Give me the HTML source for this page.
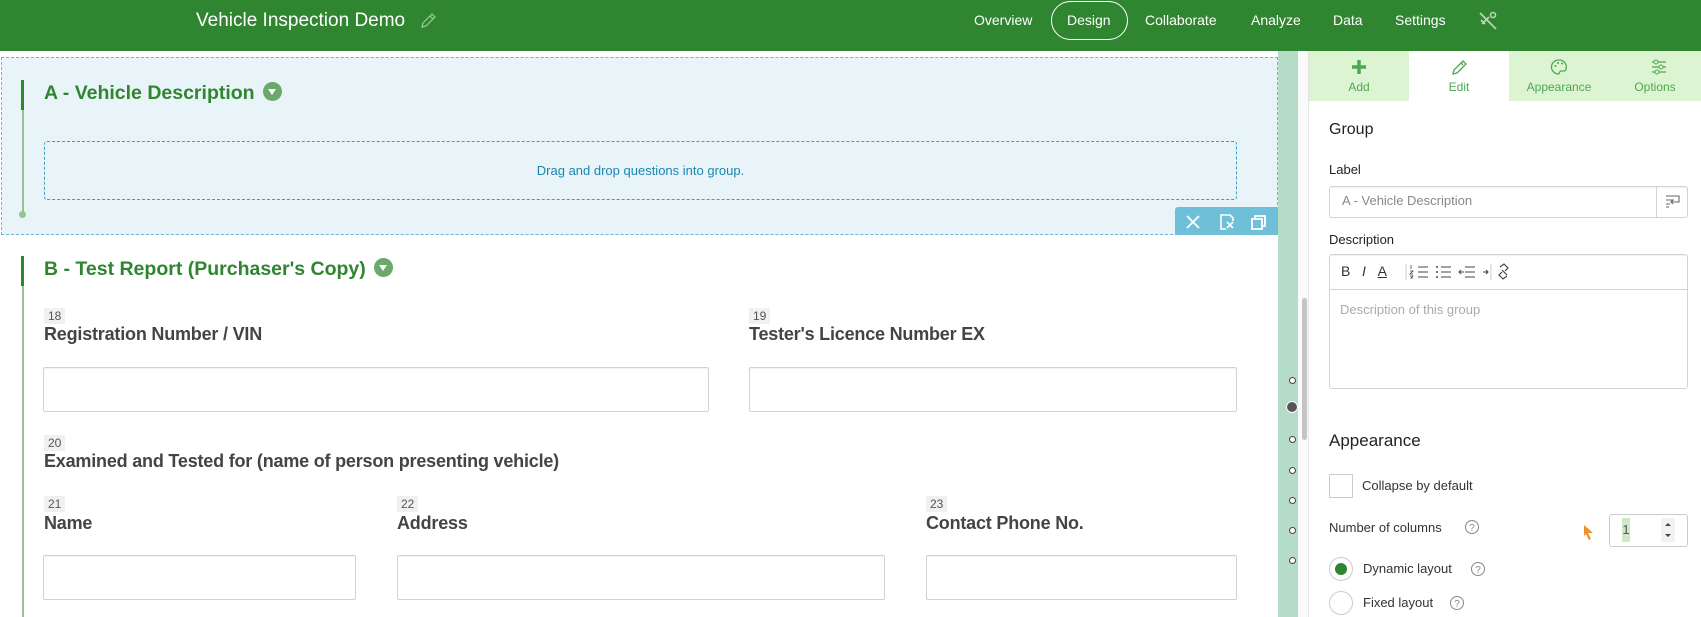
<!DOCTYPE html>
<html><head><meta charset="utf-8"><style>
*{box-sizing:border-box;margin:0;padding:0}
body{width:1701px;height:617px;overflow:hidden;background:#fff;font-family:"Liberation Sans",sans-serif;position:relative;color:#333}
.a{position:absolute}
.hdr{left:0;top:0;width:1701px;height:51px;background:#2f8530}
.nav{top:10px;color:#fff;font-size:14px;line-height:20px}
.inp{position:absolute;border:1px solid #d2d2d2;border-radius:2px;background:#fff;box-shadow:inset 0 1px 1px rgba(0,0,0,.05)}
.num{position:absolute;background:#f0f0f0;color:#555;font-size:12px;padding:0 4px;height:16px;line-height:16px}
.lbl{position:absolute;font-size:18px;color:#444;font-weight:bold;letter-spacing:-0.2px}
.gt{position:absolute;color:#2f8530;font-size:19.5px;font-weight:bold}
.tri{display:inline-block;width:19px;height:19px;border-radius:50%;background:#6aa86c;vertical-align:-2px;margin-left:8px;position:relative}
.tri:after{content:"";position:absolute;left:5px;top:7px;border-left:4.5px solid transparent;border-right:4.5px solid transparent;border-top:6px solid #fff}
.rp{font-size:13px;color:#333}
.dot{position:absolute;left:1289px;width:7px;height:7px;border-radius:50%;border:1.5px solid #444;background:#fff}
</style></head><body>
<div class="a hdr"></div>
<div class="a" style="left:196px;top:10px;color:#fff;font-size:19px">Vehicle Inspection Demo</div>
<svg class="a" style="left:419px;top:12px" width="18" height="18" viewBox="0 0 18 18"><path d="M3 15l1-4 9-9 3 3-9 9z M11 4l3 3" fill="none" stroke="#9ccc9c" stroke-width="1.2"/></svg>
<div class="a nav" style="left:974px">Overview</div>
<div class="a" style="left:1051px;top:1px;width:77px;height:39px;border:1.5px solid #fff;border-radius:20px"></div>
<div class="a nav" style="left:1067px">Design</div>
<div class="a nav" style="left:1145px">Collaborate</div>
<div class="a nav" style="left:1251px">Analyze</div>
<div class="a nav" style="left:1333px">Data</div>
<div class="a nav" style="left:1395px">Settings</div>
<svg class="a" style="left:1477px;top:10px" width="22" height="20" viewBox="0 0 22 20"><path d="M3 3l16 16 M5 14l7-7 M4 10l4 4" fill="none" stroke="#b5d6b5" stroke-width="1.8"/><circle cx="16" cy="5" r="2.5" fill="none" stroke="#b5d6b5" stroke-width="1.6"/></svg>

<div class="a" style="left:1px;top:57px;width:1277px;height:178px;background:#e8f4f8;border:1px dashed #6ab7cf"></div>
<div class="a" style="left:21px;top:80px;width:3px;height:30px;background:#2f8530"></div>
<div class="a" style="left:22px;top:110px;width:1.5px;height:104px;background:#94c494"></div>
<div class="a" style="left:19px;top:211px;width:7px;height:7px;border-radius:50%;background:#94c494"></div>
<div class="gt" style="left:44px;top:82px">A - Vehicle Description<span class="tri"></span></div>
<div class="a" style="left:44px;top:141px;width:1193px;height:59px;border:1px dashed #3a9fc0;border-radius:3px;color:#1a87b0;font-size:13px;text-align:center;line-height:57px">Drag and drop questions into group.</div>
<div class="a" style="left:1175px;top:207px;width:103px;height:28px;background:#6fbfd8;border-radius:3px 0 0 0"></div>
<svg class="a" style="left:1184px;top:212px" width="90" height="20" viewBox="0 0 90 20"><path d="M3 4l12 12M15 4L3 16" stroke="#fff" stroke-width="1.8"/><path d="M42 3h-5v14h5M40 3h6l3 3v3" fill="none" stroke="#fff" stroke-width="1.6"/><path d="M43 10l6 6M49 10l-6 6" stroke="#fff" stroke-width="1.6"/><rect x="68" y="7" width="10" height="10" fill="none" stroke="#fff" stroke-width="1.8"/><path d="M71 7V4h10v10h-3" fill="none" stroke="#fff" stroke-width="1.8"/></svg>

<div class="a" style="left:21px;top:256px;width:3px;height:30px;background:#2f8530"></div>
<div class="a" style="left:22px;top:286px;width:1.5px;height:331px;background:#94c494"></div>
<div class="gt" style="left:44px;top:258px">B - Test Report (Purchaser's Copy)<span class="tri"></span></div>

<div class="num" style="left:44px;top:308px">18</div>
<div class="lbl" style="left:44px;top:324px">Registration Number / VIN</div>
<div class="inp" style="left:43px;top:367px;width:666px;height:45px"></div>
<div class="num" style="left:749px;top:308px">19</div>
<div class="lbl" style="left:749px;top:324px">Tester's Licence Number EX</div>
<div class="inp" style="left:749px;top:367px;width:488px;height:45px"></div>
<div class="num" style="left:44px;top:435px">20</div>
<div class="lbl" style="left:44px;top:451px">Examined and Tested for (name of person presenting vehicle)</div>
<div class="num" style="left:44px;top:496px">21</div>
<div class="lbl" style="left:44px;top:513px">Name</div>
<div class="inp" style="left:43px;top:555px;width:313px;height:45px"></div>
<div class="num" style="left:397px;top:496px">22</div>
<div class="lbl" style="left:397px;top:513px">Address</div>
<div class="inp" style="left:397px;top:555px;width:488px;height:45px"></div>
<div class="num" style="left:926px;top:496px">23</div>
<div class="lbl" style="left:926px;top:513px">Contact Phone No.</div>
<div class="inp" style="left:926px;top:555px;width:311px;height:45px"></div>

<div class="a" style="left:1278px;top:51px;width:20px;height:566px;background:#b5dcc7"></div>
<div class="a" style="left:1298px;top:51px;width:11px;height:566px;background:#fafafa;border-right:1px solid #e4e4e4"></div>
<div class="a" style="left:1302px;top:298px;width:5px;height:142px;background:#c4c4c4;border-radius:3px"></div>
<div class="dot" style="top:377px"></div>
<div class="a" style="left:1286px;top:401px;width:12px;height:12px;border-radius:50%;background:#555;border:1px solid #fff"></div>
<div class="dot" style="top:436px"></div>
<div class="dot" style="top:467px"></div>
<div class="dot" style="top:497px"></div>
<div class="dot" style="top:527px"></div>
<div class="dot" style="top:557px"></div>

<div class="a" style="left:1309px;top:51px;width:100px;height:50px;background:#dcf4d2"></div>
<div class="a" style="left:1509px;top:51px;width:192px;height:50px;background:#dcf4d2"></div>
<svg class="a" style="left:1350px;top:58px" width="18" height="18" viewBox="0 0 18 18"><path d="M9 2v14M2 9h14" stroke="#4ea852" stroke-width="3.5"/></svg>
<svg class="a" style="left:1450px;top:58px" width="18" height="18" viewBox="0 0 18 18"><path d="M3 16l1-4 9-9 3 3-9 9z M11 5l2 2" fill="none" stroke="#4ea852" stroke-width="1.3"/></svg>
<svg class="a" style="left:1550px;top:58px" width="18" height="18" viewBox="0 0 18 18"><path d="M9 2a7 7 0 0 0-1 14c2 0 1-3 3-3h3a2 2 0 0 0 2-2A7 7 0 0 0 9 2z" fill="none" stroke="#4ea852" stroke-width="1.3"/><circle cx="5.5" cy="8" r="1" fill="#4ea852"/><circle cx="8" cy="5" r="1" fill="#4ea852"/><circle cx="12" cy="5.5" r="1" fill="#4ea852"/></svg>
<svg class="a" style="left:1650px;top:58px" width="18" height="18" viewBox="0 0 18 18"><path d="M2 4h14M2 9h14M2 14h14" stroke="#4ea852" stroke-width="1.2"/><circle cx="6" cy="4" r="2" fill="#dcf4d2" stroke="#4ea852"/><circle cx="11" cy="9" r="2" fill="#dcf4d2" stroke="#4ea852"/><circle cx="7" cy="14" r="2" fill="#dcf4d2" stroke="#4ea852"/></svg>
<div class="a rp" style="left:1309px;top:80px;width:100px;text-align:center;color:#4ea852;font-size:12px">Add</div>
<div class="a rp" style="left:1409px;top:80px;width:100px;text-align:center;color:#4ea852;font-size:12px">Edit</div>
<div class="a rp" style="left:1509px;top:80px;width:100px;text-align:center;color:#4ea852;font-size:12px">Appearance</div>
<div class="a rp" style="left:1609px;top:80px;width:92px;text-align:center;color:#4ea852;font-size:12px">Options</div>

<div class="a" style="left:1329px;top:121px;font-size:16px;color:#222">Group</div>
<div class="a rp" style="left:1329px;top:162px;color:#222">Label</div>
<div class="inp" style="left:1329px;top:186px;width:359px;height:32px;border-radius:3px"></div>
<div class="a" style="left:1656px;top:187px;width:1px;height:30px;background:#d2d2d2"></div>
<svg class="a" style="left:1664px;top:193px" width="18" height="16" viewBox="0 0 18 16"><path d="M2 3h13v6h-8M2 7h8M2 11h4M2 14h3M9 7l-2 2 2 2" fill="none" stroke="#666" stroke-width="1.1"/></svg>
<div class="a rp" style="left:1342px;top:193px;color:#888">A - Vehicle Description</div>
<div class="a rp" style="left:1329px;top:232px;color:#222">Description</div>
<div class="inp" style="left:1329px;top:254px;width:359px;height:135px;border-radius:3px"></div>
<div class="a" style="left:1330px;top:289px;width:357px;height:1px;background:#d2d2d2"></div>
<div class="a" style="left:1341px;top:263px;font-size:14px;color:#333">B&nbsp;&nbsp;&nbsp;<i>I</i>&nbsp;&nbsp;&nbsp;<u>A</u></div>
<svg class="a" style="left:1405px;top:262px" width="120" height="20" viewBox="0 0 120 20"><path d="M1 2v16M86 2v16" stroke="#ccc"/><path d="M13 5h10M13 10h10M13 15h10M36 5h10M36 10h10M36 15h10M60 5h10M60 10h10M60 15h10" stroke="#444" stroke-width="1.1"/><path d="M6 3v4M5 9h3l-3 3h3M5 14h3l-2 2h2" fill="none" stroke="#444" stroke-width=".8"/><path d="M31 5h2M31 10h2M31 15h2" stroke="#444" stroke-width="1.5"/><path d="M55 10h4M56 8l-2 2 2 2" fill="none" stroke="#444"/><path d="M78 10h5M81 8l2 2-2 2" fill="none" stroke="#444" stroke-width="1.1"/><path d="M84 5h0" stroke="#444"/><path d="M95 5l4-3 4 4-3 3M102 14l-4 3-4-4 3-3M97 8l5 5" fill="none" stroke="#444" stroke-width="1.2"/></svg>
<div class="a rp" style="left:1340px;top:302px;color:#aaa">Description of this group</div>

<div class="a" style="left:1329px;top:431px;font-size:17px;color:#222">Appearance</div>
<div class="a" style="left:1329px;top:474px;width:24px;height:24px;border:1px solid #ccc;background:#fff"></div>
<div class="a rp" style="left:1362px;top:478px">Collapse by default</div>
<div class="a rp" style="left:1329px;top:520px">Number of columns</div>
<svg class="a" style="left:1464px;top:519px" width="16" height="16" viewBox="0 0 16 16"><circle cx="8" cy="8" r="6.5" fill="none" stroke="#888"/><text x="8" y="12" font-size="10" text-anchor="middle" fill="#888" font-family="Liberation Sans">?</text></svg>
<svg class="a" style="left:1583px;top:524px" width="12" height="16" viewBox="0 0 12 16"><path d="M1 1l9 8H5l3 6-2 1-3-6-2 2z" fill="#f0902a"/></svg>
<div class="a" style="left:1609px;top:514px;width:79px;height:33px;border:1px solid #ccc;border-radius:3px;background:#fff"></div>
<div class="a" style="left:1622px;top:518px;width:8px;height:24px;background:#cfe8c8;font-size:13px;color:#555;line-height:24px;text-align:center">1</div>
<div class="a" style="left:1661px;top:518px;width:14px;height:24px;background:#f2f2f2"></div>
<svg class="a" style="left:1663px;top:521px" width="10" height="18" viewBox="0 0 10 18"><path d="M2 5l3-3 3 3zM2 13l3 3 3-3z" fill="#444"/></svg>
<div class="a" style="left:1329px;top:557px;width:24px;height:24px;border:1px solid #ccc;border-radius:50%;background:#fff"></div>
<div class="a" style="left:1335px;top:563px;width:12px;height:12px;border-radius:50%;background:#2f8530"></div>
<div class="a rp" style="left:1363px;top:561px">Dynamic layout</div>
<svg class="a" style="left:1470px;top:561px" width="16" height="16" viewBox="0 0 16 16"><circle cx="8" cy="8" r="6.5" fill="none" stroke="#888"/><text x="8" y="12" font-size="10" text-anchor="middle" fill="#888" font-family="Liberation Sans">?</text></svg>
<div class="a" style="left:1329px;top:591px;width:24px;height:24px;border:1px solid #ccc;border-radius:50%;background:#fff"></div>
<div class="a rp" style="left:1363px;top:595px">Fixed layout</div>
<svg class="a" style="left:1449px;top:595px" width="16" height="16" viewBox="0 0 16 16"><circle cx="8" cy="8" r="6.5" fill="none" stroke="#888"/><text x="8" y="12" font-size="10" text-anchor="middle" fill="#888" font-family="Liberation Sans">?</text></svg>
</body></html>
